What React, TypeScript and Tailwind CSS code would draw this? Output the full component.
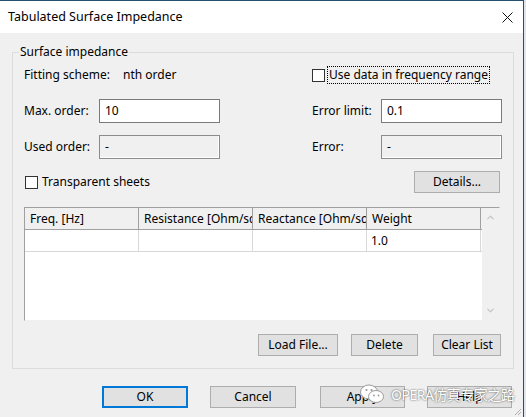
import { ChevronUp, ChevronDown } from 'lucide-react';

const font = { fontFamily: '"Noto Sans", "Noto Sans CJK SC", sans-serif' };

const Btn = ({ label, w, primary }: { label: string; w: string; primary?: boolean }) => (
  <button
    className={`${w} h-[22px] bg-[#e1e1e1] text-[12px] text-black leading-none shrink-0 ${
      primary ? 'border-2 border-[#0078d7]' : 'border border-[#adadad]'
    }`}
  >
    {label}
  </button>
);

const Field = ({ value, disabled }: { value: string; disabled?: boolean }) => (
  <div
    className={`w-[121px] h-[24px] border flex items-center px-[5px] text-[12px] ${
      disabled ? 'bg-[#f0f0f0] border-[#8c8c8c] shadow-[inset_-1px_-1px_0_#fff]' : 'bg-white border-[#7a7a7a]'
    }`}
  >
    {value}
  </div>
);

const Check = ({ label, focus }: { label: string; focus?: boolean }) => (
  <label className="flex items-center h-[18px] text-[12px]">
    <span className="w-[13px] h-[13px] border border-[#333] bg-white shrink-0" />
    <span className={`ml-[3px] px-[1px] leading-[16px] ${focus ? 'outline-1 outline-dotted outline-black' : ''}`}>
      {label}
    </span>
  </label>
);

const columns = ['Freq. [Hz]', 'Resistance [Ohm/sq]', 'Reactance [Ohm/sq]', 'Weight'];

export default function App() {
  return (
    <div className="w-[526px] h-[417px] flex bg-[#dfe5ea] overflow-hidden text-black" style={font}>
      <div className="w-[524px] h-full flex flex-col bg-[#f0f0f0] border-t border-r border-[#24506f] relative">
        {/* title bar */}
        <div className="h-[32px] bg-white flex items-center justify-between pl-[8px] pr-[10px] shrink-0">
          <span className="text-[12.5px]">Tabulated Surface Impedance</span>
          <svg width="11" height="11" viewBox="0 0 11 11">
            <path d="M0.5 0.5 L10.5 10.5 M10.5 0.5 L0.5 10.5" stroke="#111" strokeWidth="1" />
          </svg>
        </div>

        <fieldset className="ml-[12px] mt-[11px] w-[497px] border border-[#dcdcdc] px-[11px] pb-[12px]">
          <legend className="ml-[-5px] px-[1px] text-[12px] leading-[16px]">Surface impedance</legend>

          <div className="grid grid-cols-[288px_1fr] text-[12px]">
            {/* row 1 */}
            <div className="mt-[6px] h-[18px] flex items-center">
              <span className="w-[99px]">Fitting scheme:</span>
              <span>nth order</span>
            </div>
            <div className="mt-[6px]">
              <Check label="Use data in frequency range" focus />
            </div>

            {/* row 2 */}
            <div className="mt-[15px] flex items-center">
              <span className="w-[75px]">Max. order:</span>
              <Field value="10" />
            </div>
            <div className="mt-[15px] flex items-center">
              <span className="w-[69px]">Error limit:</span>
              <Field value="0.1" />
            </div>

            {/* row 3 */}
            <div className="mt-[12px] flex items-center">
              <span className="w-[75px]">Used order:</span>
              <Field value="-" disabled />
            </div>
            <div className="mt-[12px] flex items-center">
              <span className="w-[69px]">Error:</span>
              <Field value="-" disabled />
            </div>

            {/* row 4 */}
            <div className="mt-[12px] h-[22px] flex items-center pl-[1px]">
              <Check label="Transparent sheets" />
            </div>
            <div className="mt-[12px] flex justify-end pr-[2px]">
              <Btn label="Details..." w="w-[86px]" />
            </div>
          </div>

          {/* frequency table */}
          <div className="mt-[14px] w-[476px] h-[114px] flex bg-white border border-t-[#a0a0a0] border-l-[#a0a0a0] border-r-[#f0f0f0] border-b-[#f0f0f0] text-[12px]">
            <div className="flex-1 flex flex-col">
              <div className="h-[22px] flex border-b border-[#a0a0a0] bg-[#f0f0f0]">
                {columns.map((c) => (
                  <div
                    key={c}
                    className="w-[114px] px-[5px] flex items-center overflow-hidden whitespace-nowrap border-r border-[#a0a0a0]"
                  >
                    {c}
                  </div>
                ))}
              </div>
              <div className="h-[22px] flex border-b border-[#d8d8d8]">
                {columns.map((c, i) => (
                  <div key={c} className="w-[114px] px-[4px] flex items-center border-r border-[#d8d8d8]">
                    {i === 3 ? '1.0' : ''}
                  </div>
                ))}
              </div>
            </div>
            <div className="w-[17px] bg-[#f0f0f0] flex flex-col items-center justify-between py-[4px] text-[#c2c2c2]">
              <ChevronUp size={11} strokeWidth={2.5} />
              <ChevronDown size={11} strokeWidth={2.5} />
            </div>
          </div>

          <div className="mt-[13px] flex justify-end pr-[1px]">
            <Btn label="Load File..." w="w-[80px]" />
            <div className="w-[13px]" />
            <Btn label="Delete" w="w-[67px]" />
            <div className="w-[15px]" />
            <Btn label="Clear List" w="w-[68px]" />
          </div>
        </fieldset>

        <div className="mt-[17px] pl-[102px] flex">
          <Btn label="OK" w="w-[86px]" primary />
          <div className="w-[22px]" />
          <Btn label="Cancel" w="w-[86px]" />
          <div className="w-[24px]" />
          <Btn label="Apply" w="w-[85px]" />
          <div className="w-[22px]" />
          <Btn label="Help" w="w-[85px]" />
        </div>

        {/* watermark overlay */}
        <div className="absolute left-[359px] top-[382px] flex items-center pointer-events-none">
          <svg width="26" height="22" viewBox="0 0 26 22">
            <ellipse cx="10" cy="9" rx="8.5" ry="7" fill="#fff" stroke="#9a9a9a" strokeWidth="1" />
            <ellipse cx="17" cy="13.5" rx="7.5" ry="6" fill="#fff" stroke="#9a9a9a" strokeWidth="1" />
            <circle cx="7.5" cy="7" r="1.1" fill="#9a9a9a" />
            <circle cx="12.5" cy="7" r="1.1" fill="#9a9a9a" />
            <circle cx="15" cy="12.5" r="0.9" fill="#9a9a9a" />
            <circle cx="19.5" cy="12.5" r="0.9" fill="#9a9a9a" />
          </svg>
          <span className="ml-[6px] text-[14px] text-white tracking-[-0.5px] [text-shadow:0_0_2px_rgba(0,0,0,0.75)]">
            OPERA仿真专家之路
          </span>
        </div>

        {/* size grip */}
        <svg className="absolute right-[1px] bottom-[1px]" width="10" height="10" viewBox="0 0 10 10">
          <path d="M9 3 L3 9 M9 6 L6 9" stroke="#b0b0b0" strokeWidth="1" />
        </svg>
      </div>
    </div>
  );
}
